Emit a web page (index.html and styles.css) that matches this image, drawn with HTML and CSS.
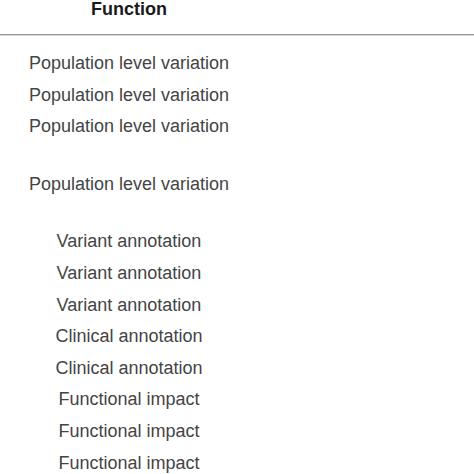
FILE: index.html
```html
<!DOCTYPE html>
<html>
<head>
<meta charset="utf-8">
<link rel="stylesheet" href="styles.css">
</head>
<body>
<div class="table">
  <div class="head"><div class="col">Function</div></div>
  <div class="rule"></div>
  <div class="body">
    <div class="group">
      <div class="col">Population level variation</div>
      <div class="col">Population level variation</div>
      <div class="col">Population level variation</div>
    </div>
    <div class="group">
      <div class="col">Population level variation</div>
    </div>
    <div class="group">
      <div class="col">Variant annotation</div>
      <div class="col">Variant annotation</div>
      <div class="col">Variant annotation</div>
      <div class="col">Clinical annotation</div>
      <div class="col">Clinical annotation</div>
      <div class="col">Functional impact</div>
      <div class="col">Functional impact</div>
      <div class="col">Functional impact</div>
    </div>
  </div>
</div>
</body>
</html>
```

FILE: styles.css
```css
html, body {
  margin: 0;
  padding: 0;
  background: #ffffff;
}
body {
  width: 474px;
  height: 474px;
  overflow: hidden;
  font-family: "Liberation Sans", Arial, sans-serif;
}
.table {
  display: flex;
  flex-direction: column;
}
.col {
  width: 258px;
  text-align: center;
  white-space: nowrap;
}
.head {
  height: 34px;
  font-size: 18px;
  line-height: 18px;
  font-weight: bold;
  color: #1a1a1a;
}
.rule {
  height: 1px;
  background: #9a9a9a;
  border-bottom: 1px solid #d4d4d4;
}
.body {
  display: flex;
  flex-direction: column;
  gap: 26px;
  padding-top: 12px;
  font-size: 18px;
  line-height: 31.6px;
  color: #444444;
}
.group {
  display: flex;
  flex-direction: column;
}
```
